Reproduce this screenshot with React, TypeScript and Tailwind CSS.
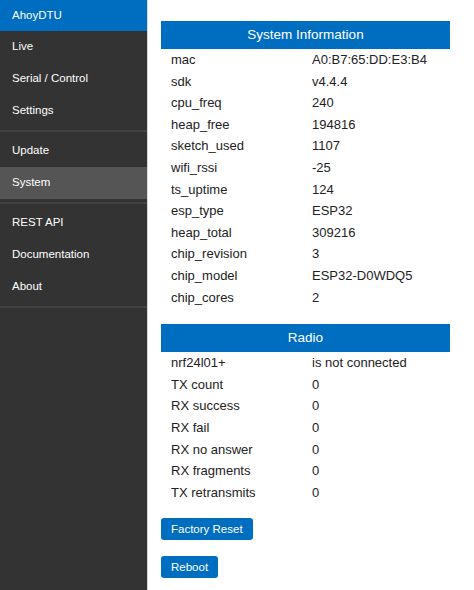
const sysInfo: [string, string][] = [
  ['mac', 'A0:B7:65:DD:E3:B4'],
  ['sdk', 'v4.4.4'],
  ['cpu_freq', '240'],
  ['heap_free', '194816'],
  ['sketch_used', '1107'],
  ['wifi_rssi', '-25'],
  ['ts_uptime', '124'],
  ['esp_type', 'ESP32'],
  ['heap_total', '309216'],
  ['chip_revision', '3'],
  ['chip_model', 'ESP32-D0WDQ5'],
  ['chip_cores', '2'],
];

const radio: [string, string][] = [
  ['nrf24l01+', 'is not connected'],
  ['TX count', '0'],
  ['RX success', '0'],
  ['RX fail', '0'],
  ['RX no answer', '0'],
  ['RX fragments', '0'],
  ['TX retransmits', '0'],
];

function NavItem({ label, active }: { label: string; active?: boolean }) {
  return (
    <div
      className={
        'h-[32px] flex items-center pl-[12px] text-white ' +
        (active ? 'bg-[#555555]' : '')
      }
    >
      {label}
    </div>
  );
}

function Divider() {
  return (
    <div className="h-[8px] pt-[3px]">
      <div className="h-[2px] bg-[#424242]" />
    </div>
  );
}

function InfoTable({ title, rows }: { title: string; rows: [string, string][] }) {
  return (
    <div className="w-[289px]">
      <div className="h-[28px] bg-[#006ec0] text-white flex items-center justify-center text-[13.5px]">
        {title}
      </div>
      {rows.map(([k, v]) => (
        <div key={k} className="h-[21.6px] flex items-center text-[13px] text-[#222]">
          <div className="w-[141px] pl-[10px]">{k}</div>
          <div className="pl-[10px]">{v}</div>
        </div>
      ))}
    </div>
  );
}

export default function App() {
  return (
    <div
      className="flex min-h-screen h-[590px] bg-white"
      style={{ fontFamily: '"Liberation Sans", Arial, sans-serif' }}
    >
      <nav className="w-[147px] shrink-0 bg-[#333333] text-[11.5px] border-r border-[#d8d8d8] box-content">
        <div className="h-[31px] bg-[#006ec0] text-white flex items-center pl-[12px]">
          AhoyDTU
        </div>
        <NavItem label="Live" />
        <NavItem label="Serial / Control" />
        <NavItem label="Settings" />
        <Divider />
        <NavItem label="Update" />
        <NavItem label="System" active />
        <Divider />
        <NavItem label="REST API" />
        <NavItem label="Documentation" />
        <NavItem label="About" />
        <Divider />
      </nav>
      <main className="pl-[13px] pt-[21px] flex flex-col">
        <InfoTable title="System Information" rows={sysInfo} />
        <div className="h-[16px]" />
        <InfoTable title="Radio" rows={radio} />
        <div className="mt-[15px] flex flex-col items-start gap-[16px]">
          <button className="h-[22px] px-[10px] bg-[#006ec0] text-white text-[11.5px] rounded-[3px]">
            Factory Reset
          </button>
          <button className="h-[22px] px-[10px] bg-[#006ec0] text-white text-[11.5px] rounded-[3px]">
            Reboot
          </button>
        </div>
      </main>
    </div>
  );
}
